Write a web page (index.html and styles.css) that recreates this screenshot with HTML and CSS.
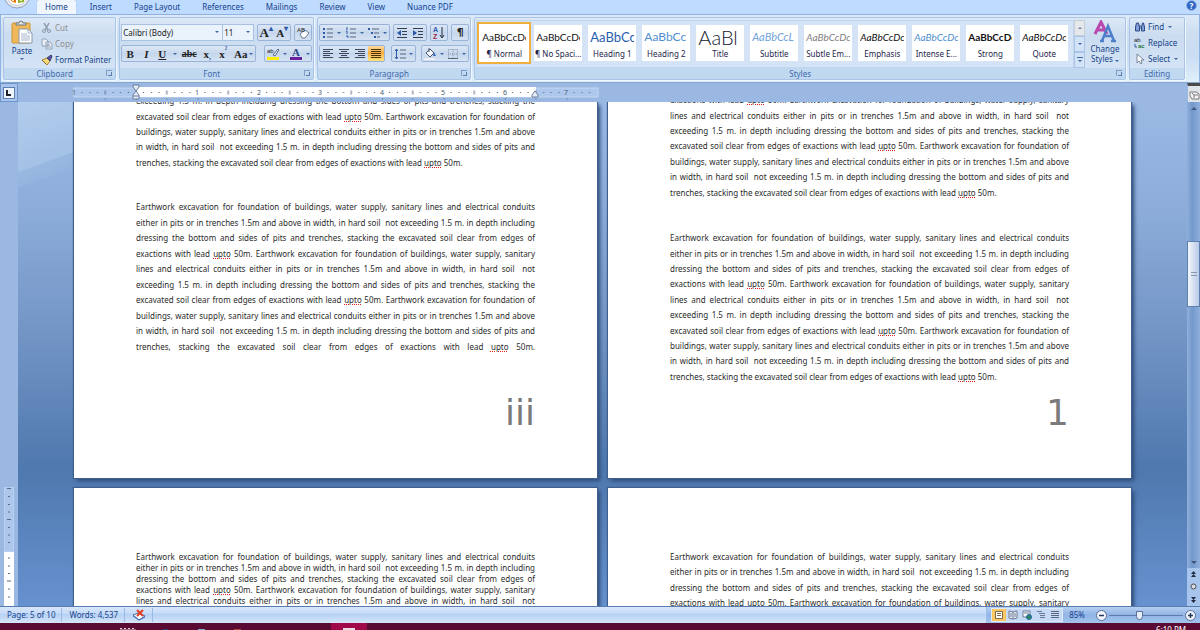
FILE: index.html
```html
<!DOCTYPE html>
<html lang="en">
<head>
<meta charset="utf-8">
<title>Document - Word</title>
<link rel="stylesheet" href="styles.css">
</head>
<body>
<div class="app">
  <header class="tabs">
    <button class="office" aria-label="Office Button">
      <svg width="28" height="28" viewBox="0 0 28 28"><circle cx="14" cy="14" r="13" fill="#e9edf3" stroke="#8f9db3"/><circle cx="14" cy="14" r="10.500" fill="#fff" stroke="#c4ccd8"/><path d="M7 10l6-3v6H7zM15 8l5-1v6h-5z" fill="#e8501e"/><path d="M7 15h6v7l-5-2z" fill="#e8701e"/><path d="M15 14h6v7l-6 1z" fill="#8db52a"/><path d="M17 17h2v3h-2zM9 17h2v3H9z" fill="#fff3c4"/><path d="M9 21h4v1z" fill="#f4b61b"/></svg>
    </button>
    <nav class="tablist">
      <button class="tab active">Home</button><button class="tab">Insert</button><button class="tab">Page Layout</button><button class="tab">References</button><button class="tab">Mailings</button><button class="tab">Review</button><button class="tab">View</button><button class="tab">Nuance PDF</button>
    </nav>
    <button class="help" aria-label="Help">?</button>
  </header>

  <div class="ribbon">
    <section class="group">
      <div class="tools clip">
        <button class="big"><svg width="22" height="24" viewBox="0 0 22 24"><rect x="1" y="3" width="18" height="20" rx="1" fill="#efb95a" stroke="#cf9433"/><path d="M5 5h10V3h-3a2 2 0 0 0-4 0H5z" fill="#dfe3e8" stroke="#6d7680"/><path d="M8 9h9l4 4v10H8z" fill="#fff" stroke="#8a97ab"/><path d="M17 9v4h4M10 14h6M10 16h9M10 18h9M10 20h9" fill="none" stroke="#a7b5cb"/></svg><span>Paste</span><i class="caret"></i></button>
        <div class="stack">
          <button class="row off"><svg width="12" height="12" viewBox="0 0 12 12" fill="none" stroke="#8d9aae"><path d="M3 1l4 7M8 1L4 8" stroke-width="1.500"/><circle cx="3" cy="9" r="1.500"/><circle cx="8" cy="9" r="1.500"/></svg>Cut</button>
          <button class="row off"><svg width="12" height="12" viewBox="0 0 12 12" fill="#e7edf6" stroke="#93a2b8"><path d="M1 1h4l2 2v5H1zM5 4h4l2 2v5H5z"/><path d="M6 7h3M6 9h4"/></svg>Copy</button>
          <button class="row"><svg width="12" height="12" viewBox="0 0 12 12"><path d="M1 6l5-2 3 3-3 4z" fill="#f5d978" stroke="#a88734"/><path d="M6 4l4-3 1 1-2 5z" fill="#5a4fa0" stroke="#34406f"/><path d="M1 6l4 4" stroke="#7c6420"/></svg>Format Painter</button>
        </div>
      </div>
      <footer class="cap"><span>Clipboard</span><i class="launch"></i></footer>
    </section>

    <section class="group">
      <div class="tools rows">
        <div class="line">
          <div class="combos">
            <label class="combo wide"><select aria-label="Font"><option>Calibri (Body)</option></select></label>
            <label class="combo slim"><select aria-label="Font size"><option>11</option></select></label>
          </div>
          <div class="set"><button class="ic serif grow" aria-label="Grow font">A<sup>▴</sup></button><button class="ic serif shrink" aria-label="Shrink font">A<sup>▾</sup></button></div>
          <div class="set"><button class="ic" aria-label="Clear formatting"><svg width="14" height="13" viewBox="0 0 14 13"><path d="M4 8l5-4 4 3-4 5H6z" fill="#fff" stroke="#6d7a94"/><text x="1" y="6" font-size="6" font-family="Liberation Sans" fill="#222">AB</text></svg></button></div>
        </div>
        <div class="line">
          <div class="set"><button class="ic serif">B</button><button class="ic serif"><em>I</em></button><button class="ic serif"><u>U</u></button><button class="ic arrow" aria-label="Underline style"><i class="caret"></i></button><button class="ic serif small"><s>abc</s></button><button class="ic serif">x<sub>,</sub></button><button class="ic serif">x<sup>²</sup></button><button class="ic serif case">Aa<i class="caret"></i></button></div>
          <div class="set"><button class="ic two" aria-label="Highlight"><svg width="13" height="13" viewBox="0 0 13 13"><text x="0" y="6" font-size="6" font-family="Liberation Sans" fill="#222">ab</text><path d="M6 8l5-6 1 1-4 6z" fill="#e9edf4" stroke="#5d6a80"/><path d="M0 10h12v3H0z" fill="#ffee00"/></svg><i class="caret"></i></button><button class="ic two" aria-label="Font color"><svg width="13" height="13" viewBox="0 0 13 13"><text x="2" y="9" font-size="11" font-weight="bold" font-family="Liberation Serif" fill="#2c4b8a">A</text><path d="M0 10h12v3H0z" fill="#6b1f9e"/></svg><i class="caret"></i></button></div>
        </div>
      </div>
      <footer class="cap"><span>Font</span><i class="launch"></i></footer>
    </section>

    <section class="group">
      <div class="tools rows">
        <div class="line">
          <div class="set"><button class="ic two" aria-label="Bullets"><svg width="12" height="12" viewBox="0 0 12 12"><path d="M1 1h2v2H1zM1 5h2v2H1zM1 9h2v2H1z" fill="#2f59a8"/><path d="M5 2h6M5 6h6M5 10h6" stroke="#59667c"/></svg><i class="caret"></i></button><button class="ic two" aria-label="Numbering"><svg width="12" height="12" viewBox="0 0 12 12"><path d="M2 0v3M1 4h1v3M1 9h2v2" fill="none" stroke="#2f59a8"/><path d="M5 2h6M5 6h6M5 10h6" stroke="#59667c"/></svg><i class="caret"></i></button><button class="ic two" aria-label="Multilevel list"><svg width="12" height="12" viewBox="0 0 12 12"><path d="M0 1h2v2H0zM3 5h2v2H3zM6 9h2v2H6z" fill="#2f59a8"/><path d="M4 2h7M6 6h5M9 10h3" stroke="#59667c"/></svg><i class="caret"></i></button></div>
          <div class="set"><button class="ic" aria-label="Decrease indent"><svg width="12" height="12" viewBox="0 0 12 12"><path d="M1 1.500h10M6 4.500h5M6 7.500h5M1 10.500h10" stroke="#333f55"/><path d="M5 3v6L1 6z" fill="#2f59a8"/></svg></button><button class="ic" aria-label="Increase indent"><svg width="12" height="12" viewBox="0 0 12 12"><path d="M1 1.500h10M6 4.500h5M6 7.500h5M1 10.500h10" stroke="#333f55"/><path d="M1 3v6l4-3z" fill="#2f59a8"/></svg></button></div>
          <div class="set"><button class="ic" aria-label="Sort"><svg width="12" height="14" viewBox="0 0 12 14"><text x="0" y="6" font-size="7" font-weight="bold" font-family="Liberation Sans" fill="#2f59a8">A</text><text x="0" y="13" font-size="7" font-weight="bold" font-family="Liberation Sans" fill="#9c2440">Z</text><path d="M9 1v10M7 9l2 3 2-3" fill="none" stroke="#222c3f"/></svg></button></div>
          <div class="set"><button class="ic pil" aria-label="Show marks">¶</button></div>
        </div>
        <div class="line">
          <div class="set"><button class="ic" aria-label="Left"><svg width="12" height="11" viewBox="0 0 12 11"><path d="M1 1.500h10M1 3.500h7M1 5.500h10M1 7.500h7M1 9.500h10" stroke="#3c4658"/></svg></button><button class="ic" aria-label="Center"><svg width="12" height="11" viewBox="0 0 12 11"><path d="M1 1.500h10M3 3.500h6M1 5.500h10M3 7.500h6M1 9.500h10" stroke="#3c4658"/></svg></button><button class="ic" aria-label="Right"><svg width="12" height="11" viewBox="0 0 12 11"><path d="M1 1.500h10M4 3.500h7M1 5.500h10M4 7.500h7M1 9.500h10" stroke="#3c4658"/></svg></button><button class="ic on" aria-label="Justify"><svg width="12" height="11" viewBox="0 0 12 11"><path d="M1 1.500h10M1 3.500h10M1 5.500h10M1 7.500h10M1 9.500h10" stroke="#4a3408"/></svg></button></div>
          <div class="set"><button class="ic two" aria-label="Line spacing"><svg width="12" height="12" viewBox="0 0 12 12"><path d="M2.500 1v10M1 3l1.500-2L4 3M1 9l1.500 2L4 9" fill="none" stroke="#2f59a8"/><path d="M6 2h6M6 6h6M6 10h6" stroke="#59667c"/></svg><i class="caret"></i></button></div>
          <div class="set"><button class="ic two" aria-label="Shading"><svg width="14" height="13" viewBox="0 0 14 13"><path d="M3 6l4-4 4 4-4 4z" fill="#f4f7fb" stroke="#4a5871"/><path d="M6 1v4" stroke="#4a5871"/><path d="M11 5l2 4h-3z" fill="#3768b8"/><path d="M1 11h12v2H1z" fill="#fff" stroke="#b8c3d3" stroke-width=".5"/></svg><i class="caret"></i></button><button class="ic two" aria-label="Borders"><svg width="12" height="12" viewBox="0 0 12 12"><path d="M1.500 1.500h9v9h-9zM6 1v10M1 6h10" fill="none" stroke="#8794aa" stroke-dasharray="1 1"/><path d="M1 10.500h10" stroke="#59667c"/></svg><i class="caret"></i></button></div>
        </div>
      </div>
      <footer class="cap"><span>Paragraph</span><i class="launch"></i></footer>
    </section>

    <section class="group styles">
      <div class="tools gal">
        <div class="gallery">
          <button class="style picked"><b class="s-plain">AaBbCcDc</b><span>¶ Normal</span></button>
          <button class="style"><b class="s-plain">AaBbCcDc</b><span>¶ No Spaci...</span></button>
          <button class="style"><b class="s-h1">AaBbCc</b><span>Heading 1</span></button>
          <button class="style"><b class="s-h2">AaBbCc</b><span>Heading 2</span></button>
          <button class="style"><b class="s-title">AaBl</b><span>Title</span></button>
          <button class="style"><b class="s-sub">AaBbCcL</b><span>Subtitle</span></button>
          <button class="style"><b class="s-subtle">AaBbCcDc</b><span>Subtle Em...</span></button>
          <button class="style"><b class="s-emph">AaBbCcDc</b><span>Emphasis</span></button>
          <button class="style"><b class="s-int">AaBbCcDc</b><span>Intense E...</span></button>
          <button class="style"><b class="s-strong">AaBbCcDc</b><span>Strong</span></button>
          <button class="style"><b class="s-emph">AaBbCcDc</b><span>Quote</span></button>
        </div>
        <div class="gscroll"><button class="dim" aria-label="Scroll up"><i class="caret up"></i></button><button aria-label="Scroll down"><i class="caret"></i></button><button aria-label="More"><i class="caret bar"></i></button></div>
        <button class="change"><svg width="24" height="24" viewBox="0 0 24 24"><path d="M2 14L8 2l6 12M4 10h8" fill="none" stroke="#b84aae" stroke-width="3"/><path d="M9 21L15 6l6 15M11 16h8M7 21h4M18 21h5" fill="none" stroke="#4d7fcb" stroke-width="2.500"/></svg><span>Change</span><span>Styles <i class="caret"></i></span></button>
      </div>
      <footer class="cap"><span>Styles</span><i class="launch"></i></footer>
    </section>

    <section class="group">
      <div class="tools stack edit">
        <button class="row"><svg width="12" height="12" viewBox="0 0 12 12" fill="#7f9fd6" stroke="#2d4a86"><path d="M1.500 6l1-4h2l1 4v4h-4zM7.500 6l1-4h1l1 4v4h-3z"/><path d="M5 5h2M5 7h2"/></svg>Find <i class="caret"></i></button>
        <button class="row"><svg width="12" height="12" viewBox="0 0 12 12"><text x="0" y="5" font-size="6" font-family="Liberation Sans" fill="#222">ab</text><text x="4" y="11" font-size="6" font-family="Liberation Sans" font-weight="bold" fill="#2b7a3d">ac</text><path d="M1 7v3h2" fill="none" stroke="#2f59a8"/></svg>Replace</button>
        <button class="row"><svg width="12" height="12" viewBox="0 0 12 12"><path d="M3 1v9l2-2 2 3 1-1-1-3h3z" fill="#fff" stroke="#7b8799"/></svg>Select <i class="caret"></i></button>
      </div>
      <footer class="cap"><span>Editing</span></footer>
    </section>
  </div>

  <div class="rulerbar">
    <button class="tabstop" aria-label="Tab selector"><svg width="12" height="12" viewBox="0 0 12 12"><rect x=".5" y=".5" width="11" height="11" fill="#eef4fc" stroke="#5b7fb5"/><path d="M4 3v5h4" fill="none" stroke="#222" stroke-width="2"/></svg></button>
    <div class="rulerwrap">
      <svg class="ruler" width="1057" height="18" viewBox="0 0 1057 18">
        <defs><pattern id="inch" x="62" y="0" width="61.500" height="18" patternUnits="userSpaceOnUse"><path d="M7.500 9v1M15.500 9v1M23 9v1M38.500 9v1M46 9v1M54 9v1" stroke="#5c6b85" stroke-width="1.200"/><path d="M30.750 7.500v4" stroke="#5c6b85"/><path d="M30.750 15v2M.5 15v2" stroke="#6f8fc0"/></pattern></defs>
        <rect x="0" y="5" width="524" height="9" fill="#adc7ec" stroke="#c3d7f3"/><rect x="62" y="4" width="400" height="10" fill="#fff"/>
        <rect x="2" y="4" width="516" height="14" fill="url(#inch)"/>
        <g class="nums"><text x="0" y="12">1</text><text x="123" y="12">1</text><text x="185" y="12">2</text><text x="246" y="12">3</text><text x="308" y="12">4</text><text x="369" y="12">5</text><text x="431" y="12">6</text><text x="492" y="12">7</text></g>
        <g fill="#e4ebf5" stroke="#6c7f9e"><path d="M59 2h6v2l-3 4-3-4zM59 16v-4l3-4 3 4v4zM59 13h6"/><path d="M458 14v-2l3-4 3 4v2z"/></g>
      </svg>
    </div>
    <button class="viewruler" aria-label="View ruler"><svg width="11" height="11" viewBox="0 0 11 11"><path d="M1 3h6l3 2v5H3L1 7z" fill="#f3f3f3" stroke="#7c7c7c"/><path d="M3 4l2 2h4M5 6v3" fill="none" stroke="#7c7c7c"/></svg></button>
  </div>

  <main class="work">
    <aside class="vruler"><svg width="10" height="119" viewBox="0 0 10 119"><path d="M0 0h10v65H0z" fill="#adc7ec" stroke="#c3d7f3"/><path d="M0 65h10v54H0z" fill="#fff"/><path d="M3 1.500h4M4 9.500h2M4 17.500h2M4 25h2M3 32.500h4M4 40.500h2M4 48h2M4 55.500h2M4 71h2M4 79h2M4 86.500h2M3 94h4M4 102h2M4 110h2" stroke="#5c6b85"/></svg></aside>
    <div class="desk">
      <article class="page tail">
        <p class="para five"><span>exceeding 1.5 m. in depth including dressing the bottom and sides of pits and trenches, stacking the</span><span>excavated soil clear from edges of exactions with lead <u>upto</u> 50m. Earthwork excavation for foundation of</span><span>buildings, water supply, sanitary lines and electrical conduits either in pits or in trenches 1.5m and above</span><span>in width, in hard soil &nbsp;not exceeding 1.5 m. in depth including dressing the bottom and sides of pits and</span><span class="last">trenches, stacking the excavated soil clear from edges of exactions with lead <u>upto</u> 50m.</span></p>
        <p class="para ten"><span>Earthwork excavation for foundation of buildings, water supply, sanitary lines and electrical conduits</span><span>either in pits or in trenches 1.5m and above in width, in hard soil &nbsp;not exceeding 1.5 m. in depth including</span><span>dressing the bottom and sides of pits and trenches, stacking the excavated soil clear from edges of</span><span>exactions with lead <u>upto</u> 50m. Earthwork excavation for foundation of buildings, water supply, sanitary</span><span>lines and electrical conduits either in pits or in trenches 1.5m and above in width, in hard soil &nbsp;not</span><span>exceeding 1.5 m. in depth including dressing the bottom and sides of pits and trenches, stacking the</span><span>excavated soil clear from edges of exactions with lead <u>upto</u> 50m. Earthwork excavation for foundation of</span><span>buildings, water supply, sanitary lines and electrical conduits either in pits or in trenches 1.5m and above</span><span>in width, in hard soil &nbsp;not exceeding 1.5 m. in depth including dressing the bottom and sides of pits and</span><span>trenches, stacking the excavated soil clear from edges of exactions with lead <u>upto</u> 50m.</span></p>
        <footer class="folio">iii</footer>
      </article>
      <article class="page tail">
        <p class="para seven"><span>exactions with lead <u>upto</u> 50m. Earthwork excavation for foundation of buildings, water supply, sanitary</span><span>lines and electrical conduits either in pits or in trenches 1.5m and above in width, in hard soil &nbsp;not</span><span>exceeding 1.5 m. in depth including dressing the bottom and sides of pits and trenches, stacking the</span><span>excavated soil clear from edges of exactions with lead <u>upto</u> 50m. Earthwork excavation for foundation of</span><span>buildings, water supply, sanitary lines and electrical conduits either in pits or in trenches 1.5m and above</span><span>in width, in hard soil &nbsp;not exceeding 1.5 m. in depth including dressing the bottom and sides of pits and</span><span class="last">trenches, stacking the excavated soil clear from edges of exactions with lead <u>upto</u> 50m.</span></p>
        <p class="para ten"><span>Earthwork excavation for foundation of buildings, water supply, sanitary lines and electrical conduits</span><span>either in pits or in trenches 1.5m and above in width, in hard soil &nbsp;not exceeding 1.5 m. in depth including</span><span>dressing the bottom and sides of pits and trenches, stacking the excavated soil clear from edges of</span><span>exactions with lead <u>upto</u> 50m. Earthwork excavation for foundation of buildings, water supply, sanitary</span><span>lines and electrical conduits either in pits or in trenches 1.5m and above in width, in hard soil &nbsp;not</span><span>exceeding 1.5 m. in depth including dressing the bottom and sides of pits and trenches, stacking the</span><span>excavated soil clear from edges of exactions with lead <u>upto</u> 50m. Earthwork excavation for foundation of</span><span>buildings, water supply, sanitary lines and electrical conduits either in pits or in trenches 1.5m and above</span><span>in width, in hard soil &nbsp;not exceeding 1.5 m. in depth including dressing the bottom and sides of pits and</span><span class="last">trenches, stacking the excavated soil clear from edges of exactions with lead <u>upto</u> 50m.</span></p>
        <footer class="folio">1</footer>
      </article>
      <article class="page head">
        <p class="para tight"><span>Earthwork excavation for foundation of buildings, water supply, sanitary lines and electrical conduits</span><span>either in pits or in trenches 1.5m and above in width, in hard soil &nbsp;not exceeding 1.5 m. in depth including</span><span>dressing the bottom and sides of pits and trenches, stacking the excavated soil clear from edges of</span><span>exactions with lead <u>upto</u> 50m. Earthwork excavation for foundation of buildings, water supply, sanitary</span><span>lines and electrical conduits either in pits or in trenches 1.5m and above in width, in hard soil &nbsp;not</span></p>
      </article>
      <article class="page head">
        <p class="para four"><span>Earthwork excavation for foundation of buildings, water supply, sanitary lines and electrical conduits</span><span>either in pits or in trenches 1.5m and above in width, in hard soil &nbsp;not exceeding 1.5 m. in depth including</span><span>dressing the bottom and sides of pits and trenches, stacking the excavated soil clear from edges of</span><span>exactions with lead <u>upto</u> 50m. Earthwork excavation for foundation of buildings, water supply, sanitary</span></p>
      </article>
    </div>
    <aside class="scroll">
      <button aria-label="Scroll up"><i class="caret up"></i></button>
      <div class="track"><div class="thumb"></div></div>
      <button aria-label="Scroll down"><i class="caret"></i></button>
      <div class="browse">
        <button aria-label="Previous page"><svg width="7" height="7" viewBox="0 0 7 7"><path d="M1 3l2.500-3L6 3zM1 6l2.500-3L6 6z" fill="#222c3f"/></svg></button>
        <button aria-label="Select browse object"><svg width="7" height="7" viewBox="0 0 7 7"><circle cx="3.500" cy="3.500" r="2.500" fill="#d5dbe5" stroke="#4d4d4d"/></svg></button>
        <button aria-label="Next page"><svg width="7" height="7" viewBox="0 0 7 7"><path d="M1 1l2.500 3L6 1zM1 4l2.500 3L6 4z" fill="#222c3f"/></svg></button>
      </div>
    </aside>
  </main>

  <footer class="status">
    <button>Page: 5 of 10</button><button>Words: 4,537</button><button aria-label="Proofing errors"><svg width="14" height="12" viewBox="0 0 14 12"><path d="M1 6l5-2 7 3-6 4z" fill="#fff" stroke="#3d6cb8"/><path d="M1 7l6 4 6-3" fill="none" stroke="#3d6cb8"/><path d="M5 1l6 6M11 1L5 7" stroke="#e23b23" stroke-width="2"/></svg></button>
    <div class="zoombar">
      <div class="views">
        <button class="on" aria-label="Print Layout"><svg width="10" height="10" viewBox="0 0 10 10"><path d="M1.500 1.500h7v7h-7z" fill="#fff" stroke="#7a6a46"/><path d="M3 3.500h4M3 5.500h4" stroke="#7a6a46"/></svg></button>
        <button aria-label="Full Screen Reading"><svg width="10" height="10" viewBox="0 0 10 10"><path d="M1 1l4 1 4-1v7L5 9 1 8zM5 2v7" fill="#eef1f6" stroke="#6b7892"/><path d="M2 4h2M2 6h2M6 4h2M6 6h2" stroke="#6b7892"/></svg></button>
        <button aria-label="Web Layout"><svg width="10" height="10" viewBox="0 0 10 10"><path d="M1 1h7v6H1z" fill="#fff" stroke="#6b7892"/><path d="M2 3h5" stroke="#6b7892"/><circle cx="7" cy="7" r="2.500" fill="#2e8a62" stroke="#2463a8"/></svg></button>
        <button aria-label="Outline"><svg width="10" height="10" viewBox="0 0 10 10"><path d="M1 1.500h5M3 3.500h6M4 5.500h5M4 7.500h5" stroke="#6b7892"/></svg></button>
        <button aria-label="Draft"><svg width="10" height="10" viewBox="0 0 10 10"><path d="M1 1.500h8M1 3.500h8M1 5.500h8M1 7.500h8" stroke="#59667c"/></svg></button>
      </div>
      <button class="pct">85%</button>
      <button class="round" aria-label="Zoom out"><svg width="11" height="11" viewBox="0 0 11 11"><circle cx="5.500" cy="5.500" r="5" fill="#f2f6fc" stroke="#5a6f94"/><path d="M3 5.500h5" stroke="#26395c" stroke-width="1.500"/></svg></button>
      <input class="slider" type="range" min="0" max="100" value="41" aria-label="Zoom">
      <button class="round" aria-label="Zoom in"><svg width="11" height="11" viewBox="0 0 11 11"><circle cx="5.500" cy="5.500" r="5" fill="#f2f6fc" stroke="#5a6f94"/><path d="M3 5.500h5M5.500 3v5" stroke="#26395c" stroke-width="1.500"/></svg></button>
    </div>
  </footer>
  <div class="taskbar">
    <svg class="apps" width="260" height="7" viewBox="0 0 260 7"><path d="M30 5.500h2M34 5.500h2M38 5.500h2M42 5.500h2M30 7h16" stroke="#d9ccd3"/><path d="M73 6.500h5" stroke="#30407c"/><path d="M108 6.500h7" stroke="#85a6cf"/><path d="M144 6.500h7" stroke="#b8433e"/><path d="M241 0h36v7h-36z" fill="#a0084a"/></svg>
    <button class="taskword" aria-label="Word"><svg width="14" height="2" viewBox="0 0 14 2"><path d="M1 0h12v2H1z" fill="#eadbe5"/></svg></button>
    <time class="clock">6:10 PM</time>
  </div>
</div>
</body>
</html>
```
FILE: styles.css
```css
* { box-sizing: border-box; }
body { margin: 0; overflow: hidden; font: 8px/10px "Noto Sans", "Open Sans", sans-serif; color: #15428b; }
button { font: inherit; color: inherit; background: none; border: 0; padding: 0; margin: 0; display: flex; align-items: center; justify-content: center; }
svg { display: block; flex: none; }
.app { display: flex; flex-direction: column; height: 100vh; }

.caret { display: inline-block; flex: none; border: 2px solid transparent; border-top-color: #3d66a5; border-bottom: 0; }
.caret.up { border-bottom: 2px solid #6c7f9e; border-top: 0; }
.caret.bar { position: relative; }
.caret.bar::before { content: ""; position: absolute; left: -3px; top: -5px; width: 6px; height: 1px; background: #3d66a5; }
.row .caret { margin-left: 2px; }

.tabs { position: relative; flex: none; display: flex; height: 14px; background: #bfdbff; padding-left: 37px; }
.office { position: absolute; left: 3px; top: -19px; z-index: 2; }
.tablist { display: flex; gap: 6px; flex: 1; }
.tab { padding: 0 8px; height: 14px; }
.tab.active { background: #f0f6fe; border-radius: 2px 2px 0 0; box-shadow: 0 0 1px #7ba3dc; }
.help { width: 11px; height: 11px; margin: 0 3px 0 0; border-radius: 50%; background: #2f66c4; border: 1px solid #9cb9e6; color: #fff; font-weight: bold; }

.ribbon { flex: none; display: flex; gap: 3px; padding: 2px 14px 2px 2px; height: 69px; border: 1px solid #8db2e3; border-bottom-color: #87a4cc; background: linear-gradient(#dde9f7, #cfdff2 25%, #c9dcf2 60%, #dff0fb); }
.group { display: flex; flex-direction: column; border: 1px solid #a9c4e6; border-radius: 2px; box-shadow: 1px 1px 0 #eef6ff; background: linear-gradient(#dce8f6, #cbdcf0 30%, #d7e6f7); }
.tools { flex: 1; min-height: 0; display: flex; }
.cap { display: flex; height: 11px; align-items: center; background: #c1d8f1; color: #3e6aaa; position: relative; }
.cap span { flex: 1; text-align: center; padding-right: 10px; }
.cap span:last-child, .styles .cap span { padding-right: 0; }
.launch { position: absolute; right: 3px; top: 2px; width: 6px; height: 6px; border: solid #7f9cc6; border-width: 1px 0 0 1px; }
.launch::after { content: ""; position: absolute; right: 0; bottom: 0; width: 3px; height: 3px; border: solid #5b7db0; border-width: 0 1px 1px 0; }

.clip { gap: 6px; padding: 2px 4px 0 5px; }
.big { flex-direction: column; justify-content: flex-start; gap: 2px; width: 26px; }
.stack { display: flex; flex-direction: column; justify-content: flex-start; }
.stack .row { height: 16px; gap: 2px; justify-content: flex-start; white-space: nowrap; }
.off { color: #8d8d8d; }
.edit { padding: 1px 4px 0; width: 54px; }

.rows { flex-direction: column; gap: 4px; padding: 6px 1px 0; }
.line { display: flex; gap: 3px; justify-content: space-between; }
.set { display: flex; height: 17px; border: 1px solid #9ab4d9; border-radius: 2px; background: linear-gradient(#dde8f6, #c6d7ed 50%, #d4e2f3); }
.ic { width: 16px; height: 15px; color: #222; }
.ic.two { width: 23px; gap: 3px; }
.ic.arrow { width: 9px; }
.ic.on { background: linear-gradient(#fbd9a0, #f9b044 45%, #fde27d); }
.serif { font: bold 11px/12px "Liberation Serif", serif; color: #222; }
.serif sup, .serif sub { font-size: 8px; line-height: 8px; color: #2f59a8; }
.serif sup { align-self: flex-start; }
.serif sub { align-self: flex-end; }
.grow { font-size: 13px; }
.small { font-size: 10px; width: 20px; }
.ic.case { width: 24px; gap: 1px; }
.pil { font: bold 11px/12px "DejaVu Sans", sans-serif; }
.combos { display: flex; background: #eaf2fb; border: 1px solid #a9c1e2; height: 17px; }
.combo { position: relative; display: flex; }
.combo.slim { border-left: 1px solid #a9c1e2; }
.combo::after { content: ""; position: absolute; right: 3px; top: 6px; border: 2px solid transparent; border-top-color: #3d66a5; border-bottom: 0; }
.combo select { appearance: none; border: 0; background: none; font: inherit; color: #222; padding: 0 1px; }
.wide select { width: 100px; }
.slim select { width: 30px; }

.styles { flex: 1; min-width: 0; }
.gal { gap: 3px; padding: 2px 3px 0 1px; }
.gallery { flex: 1; display: flex; gap: 6px; align-items: flex-start; background: #d4e4f6; padding: 4px 3px 0; border: 1px solid #c0d5ee; min-width: 0; overflow: hidden; }
.style { width: 48px; height: 36px; flex: none; flex-direction: column; justify-content: flex-start; background: #fff; color: #1e1e4a; overflow: hidden; white-space: nowrap; }
.style.picked { box-shadow: 0 0 0 1px #fff, 0 0 0 3px #f0b040; }
.style b { width: 44px; height: 24px; overflow: hidden; display: flex; align-items: center; justify-content: flex-start; font: 10px/24px Lato, sans-serif; color: #111; }
.style .s-h1 { font-size: 13px; color: #1f60ae; }
.style .s-h2 { font-size: 12px; color: #4f8fd0; }
.style .s-title { font-size: 20px; font-weight: 300; color: #17202e; }
.style .s-sub { font-size: 11px; font-style: italic; color: #6fa4dc; }
.style .s-subtle { font-style: italic; color: #808080; }
.style .s-emph { font-style: italic; }
.style .s-int { font-style: italic; color: #4f8fd0; }
.style .s-strong { font-weight: bold; }
.gscroll { display: flex; flex-direction: column; width: 11px; margin-left: -3px; }
.gscroll button { flex: 1; border: 1px solid #aac4e6; background: #d3e3f7; }
.gscroll .dim { background: #e6e8ec; border-color: #c8ced8; }
.gscroll .caret.bar { top: 1px; }
.change { flex-direction: column; justify-content: flex-start; width: 34px; }

.rulerbar { flex: none; display: flex; height: 19px; background: #9ab8e1; }
.tabstop { width: 18px; border: 1px solid #6f95cc; background: #a9c4ea; }
.rulerwrap { flex: 1; display: flex; justify-content: center; min-width: 0; overflow: hidden; }
.ruler { overflow: visible; }
.nums { font: 7px "Noto Sans", sans-serif; fill: #4b5a74; text-anchor: middle; }
.viewruler { width: 13px; border-top: 3px solid #4a4a4a; background: #dfe3ea; border-left: 1px solid #9ab8e1; }

.work { flex: 1; min-height: 0; display: flex; }
.vruler { width: 18px; flex: none; background: #9ab8e1; display: flex; align-items: flex-end; padding-left: 4px; }
.desk { flex: 1; min-width: 0; overflow: hidden; display: grid; grid-template-columns: minmax(0, 523px) minmax(0, 523px); grid-template-rows: 376px 1fr; gap: 10px 11px; justify-content: center; background: linear-gradient(160deg, #b2cdec, #a4c1e6 66px, #9ab9e1 66px, #94b3df 80px, transparent 81px) 0 0 / 56px 88px no-repeat, linear-gradient(#9bb9e3, #8eadda 20%, #7799c9 42%, #4f78ae 73%, #6792cf); }
.page { background: #fff; padding: 0 62px; box-shadow: 0 0 1px 1px #3f5f8f, 3px 3px 4px #2c4a77; overflow: hidden; display: flex; flex-direction: column; min-height: 0; }
.para { margin: 0; display: grid; flex: none; grid-auto-rows: 1fr; font: 8px/11px "Noto Sans", "Open Sans", sans-serif; color: #2b2b2b; }
.para span { text-align: justify; text-align-last: justify; align-self: center; white-space: nowrap; }
.para .last { text-align-last: left; }
.para u { text-decoration: underline dotted #e02020 1px; text-underline-offset: 1px; }
.tail { justify-content: flex-end; }
.five { height: 77px; margin-bottom: 29px; }
.seven { height: 108px; margin-bottom: 30px; }
.ten { height: 155px; }
.seven ~ .ten { height: 154px; }
.folio { font: 36px/44px "DejaVu Sans", sans-serif; color: #7b7b7b; text-align: right; padding: 37px 0 43px; }
.seven ~ .folio { padding-top: 7px; }
.head { padding-top: 61px; }
.tight { height: 55px; margin-top: 2px; }
.four { height: 61px; }

.scroll { width: 13px; flex: none; display: flex; flex-direction: column; background: linear-gradient(90deg, #8fb0dc, #7398cb 40%, #8fb0de); }
.scroll > button { height: 12px; }
.scroll > button .caret { border-width: 3px; border-top-color: #40567d; border-bottom-width: 0; }
.scroll > button .up { border-bottom: 3px solid #40567d; border-top: 0; }
.track { flex: 1; padding-top: 127px; }
.thumb { height: 66px; border: 1px solid #5f7fae; background: linear-gradient(#8a97a8, #8a97a8) center 30px / 6px 1px no-repeat, linear-gradient(#8a97a8, #8a97a8) center 33px / 6px 1px no-repeat, linear-gradient(90deg, #f2f6fc, #b9cbe6); }
.browse { display: flex; flex-direction: column; justify-content: space-around; height: 38px; background: #a6c4ec; }

.status { flex: none; height: 17px; display: flex; align-items: center; border-top: 1px solid #567db1; background: linear-gradient(#d7e6f9, #c7dcf8 40%, #b3d0f5 42%, #d7e5f7); color: #15428b; }
.status > button { height: 14px; padding: 0 6px 0 7px; border-right: 1px solid #9dbbe2; }
.zoombar { margin-left: auto; display: flex; align-items: center; height: 16px; padding: 0 4px; background: linear-gradient(#b7d0f0, #8fb4e6 50%, #a5c4ed); border-left: 1px solid #a0bfe8; }
.views { display: flex; background: #c6daf5; border: 1px solid #dfeafa; }
.views button { width: 14px; height: 12px; }
.views .on { background: #fbc765; }
.pct { margin: 0 11px 0 6px; }
.slider { appearance: none; width: 74px; height: 10px; margin: 0 2px; background: linear-gradient(#5f7ba8, #5f7ba8) center / 100% 1px no-repeat; }
.slider::-webkit-slider-thumb { appearance: none; width: 7px; height: 9px; background: #e6eefa; border: 1px solid #5a6f94; border-radius: 0 0 4px 4px; }

.taskbar { flex: none; position: relative; height: 7px; background: #5a0b33; overflow: hidden; display: flex; justify-content: space-between; padding: 0 14px 0 90px; }
.apps { overflow: visible; }
.taskword { position: absolute; left: 342px; bottom: 0; }
.clock { color: #fff; padding-top: 2px; }
```
